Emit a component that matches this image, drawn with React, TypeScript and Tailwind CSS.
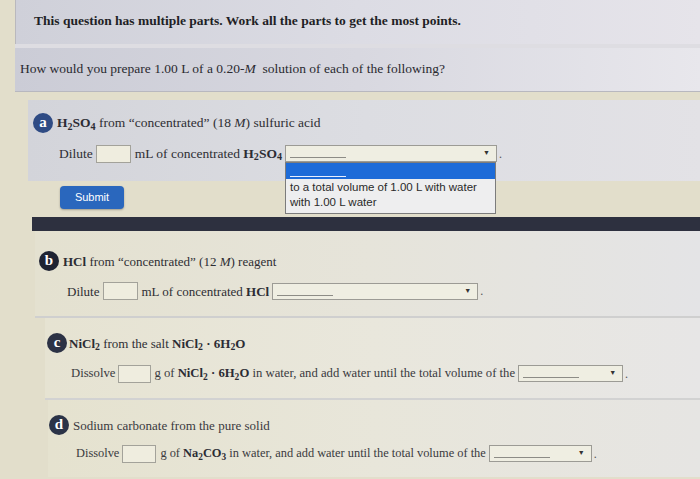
import React from "react";

const serif = "font-['Liberation_Serif','Times_New_Roman',serif]";
const sans = "font-['Liberation_Sans',Arial,sans-serif]";

function Badge({ letter, tone }: { letter: string; tone: string }) {
  return (
    <span
      className={`flex h-[20px] w-[20px] shrink-0 items-center justify-center rounded-full text-[15px] font-bold leading-none text-white ${tone}`}
    >
      <span className="-mt-[2px]">{letter}</span>
    </span>
  );
}

function Blank({ w }: { w: string }) {
  return <span className={`block h-[18px] border border-[#a3a29a] bg-[#efeddf] ${w}`} />;
}

function Select({ w, open = false }: { w: string; open?: boolean }) {
  return (
    <span className="flex items-center">
      <span
        className={`relative flex h-[17px] items-center justify-between border border-[#9c9b95] bg-[#efeee2] pl-[4px] pr-[6px] ${w}`}
      >
        <span className="mt-[8px] h-px w-[56px] bg-[#8d8c86]" />
        <span className="text-[7px] leading-none text-[#333]">▼</span>
        {open && (
          <span className={`absolute left-[-1px] top-[16px] z-10 flex w-[211px] flex-col border border-[#7c7c7c] bg-[#eeeeef] ${sans}`}>
            <span className="flex h-[16px] items-end bg-[#1d6bd8] px-[4px] pb-[2px]">
              <span className="h-px w-[56px] bg-[#e8efff]" />
            </span>
            <span className="px-[4px] pt-[1px] text-[11.5px] leading-[15px] text-[#2a2a2a]">
              to a total volume of 1.00 L with water
            </span>
            <span className="px-[4px] pb-[3px] text-[11.5px] leading-[15px] text-[#2a2a2a]">with 1.00 L water</span>
          </span>
        )}
      </span>
      <span className="ml-[2px] text-[12px] text-[#555]">.</span>
    </span>
  );
}

function Chem({ children }: { children: React.ReactNode }) {
  return <span className="font-bold text-[#2c2c34]">{children}</span>;
}

export default function App() {
  return (
    <div className={`h-[479px] w-[700px] overflow-hidden bg-[#e2decb] ${serif} text-[#2e2e33]`}>
      {/* header */}
      <div className="ml-[15px] flex h-[44px] items-center border-l border-[#b9b8bd] bg-gradient-to-r from-[#cfd0d9] via-[#dcdce4] to-[#e6e4ea] pl-[18px] pb-[2px]">
        <span className="text-[13.5px] font-bold text-[#1f1f26]">
          This question has multiple parts. Work all the parts to get the most points.
        </span>
      </div>
      <div className="ml-[15px] h-[4px] bg-[#dedde2]" />
      <div className="ml-[15px] flex h-[44px] items-center border-b border-[#b8b8bf] bg-gradient-to-r from-[#cbccd6] via-[#d8d8e0] to-[#e8e7ec] pl-[5px]">
        <span className="text-[13.5px] text-[#2a2a30]">
          How would you prepare 1.00 L of a 0.20-<i>M</i>&nbsp; solution of each of the following?
        </span>
      </div>
      <div className="h-[8px]" />

      {/* part a */}
      <div className="ml-[28px] flex h-[81px] flex-col bg-gradient-to-r from-[#d3d4da] via-[#dcdde2] to-[#e3e2e6] pl-[5px] pt-[13px]">
        <div className="flex h-[20px] items-center gap-[4px] text-[13.5px]">
          <Badge letter="a" tone="bg-[#2f4b84]" />
          <span className="leading-none">
            <Chem>
              H<sub>2</sub>SO<sub>4</sub>
            </Chem>{" "}
            from “concentrated” (18 <i>M</i>) sulfuric acid
          </span>
        </div>
        <div className="ml-[26px] mt-[11px] flex h-[19px] items-center text-[13.5px]">
          <span className="leading-none">Dilute</span>
          <span className="ml-[3px]">
            <Blank w="w-[35px]" />
          </span>
          <span className="ml-[4px] leading-none">
            mL of concentrated{" "}
            <Chem>
              H<sub>2</sub>SO<sub>4</sub>
            </Chem>
          </span>
          <span className="ml-[3px]">
            <Select w="w-[212px]" open />
          </span>
        </div>
      </div>
      <div className="ml-[60px] mt-[5px] flex h-[23px] w-[64px] items-center justify-center rounded-[4px] bg-[#2a67bd] shadow-[0_1px_2px_rgba(0,0,0,0.3)]">
        <span className={`${sans} text-[11px] text-white`}>Submit</span>
      </div>
      <div className="ml-[32px] mt-[8px] h-[14px] bg-[#2d303f]" />

      {/* part b */}
      <div className="ml-[35px] flex h-[87px] flex-col border-b-2 border-[#cfcfcf] bg-gradient-to-r from-[#e4e1d0] via-[#e6e4da] to-[#e4e4e6] pl-[4px] pt-[20px]">
        <div className="flex h-[20px] items-center gap-[4px] text-[13px]">
          <Badge letter="b" tone="bg-[#1f2333]" />
          <span className="leading-none">
            <Chem>HCl</Chem> from “concentrated” (12 <i>M</i>) reagent
          </span>
        </div>
        <div className="ml-[28px] mt-[11px] flex h-[18px] items-center text-[13px]">
          <span className="leading-none">Dilute</span>
          <span className="ml-[3px]">
            <Blank w="w-[35px]" />
          </span>
          <span className="ml-[4px] leading-none">
            mL of concentrated <Chem>HCl</Chem>
          </span>
          <span className="ml-[3px]">
            <Select w="w-[206px]" />
          </span>
        </div>
      </div>

      {/* part c */}
      <div className="ml-[45px] flex h-[82px] flex-col border-b-2 border-[#d2d2d2] bg-gradient-to-r from-[#e6e3d2] via-[#e9e7dc] to-[#e7e6e6] pl-[2px] pt-[15px]">
        <div className="flex h-[20px] items-center gap-[2px] text-[13px]">
          <Badge letter="c" tone="bg-[#2c3245]" />
          <span className="leading-none">
            <Chem>
              NiCl<sub>2</sub>
            </Chem>{" "}
            from the salt{" "}
            <Chem>
              NiCl<sub>2</sub> · 6H<sub>2</sub>O
            </Chem>
          </span>
        </div>
        <div className="ml-[24px] mt-[12px] flex h-[17px] items-center text-[12.7px] text-[#3a3a3e]">
          <span className="leading-none">Dissolve</span>
          <span className="ml-[3px]">
            <Blank w="w-[33px]" />
          </span>
          <span className="ml-[3px] leading-none">
            g of{" "}
            <Chem>
              NiCl<sub>2</sub> · 6H<sub>2</sub>O
            </Chem>{" "}
            in water, and add water until the total volume of the
          </span>
          <span className="ml-[3px]">
            <Select w="w-[105px]" />
          </span>
        </div>
      </div>

      {/* part d */}
      <div className="ml-[48px] flex h-[77px] flex-col bg-gradient-to-r from-[#e5e2cf] via-[#e8e6da] to-[#e6e5e3] pl-[1px] pt-[15px]">
        <div className="flex h-[20px] items-center gap-[4px] text-[13px]">
          <Badge letter="d" tone="bg-[#2b3347]" />
          <span className="leading-none text-[#3a3a3e]">Sodium carbonate from the pure solid</span>
        </div>
        <div className="ml-[27px] mt-[10px] flex h-[17px] items-center text-[12.4px] text-[#3a3a3e]">
          <span className="leading-none">Dissolve</span>
          <span className="ml-[3px]">
            <Blank w="w-[34px]" />
          </span>
          <span className="ml-[4px] leading-none">
            g of{" "}
            <Chem>
              Na<sub>2</sub>CO<sub>3</sub>
            </Chem>{" "}
            in water, and add water until the total volume of the
          </span>
          <span className="ml-[3px]">
            <Select w="w-[103px]" />
          </span>
        </div>
      </div>
    </div>
  );
}
